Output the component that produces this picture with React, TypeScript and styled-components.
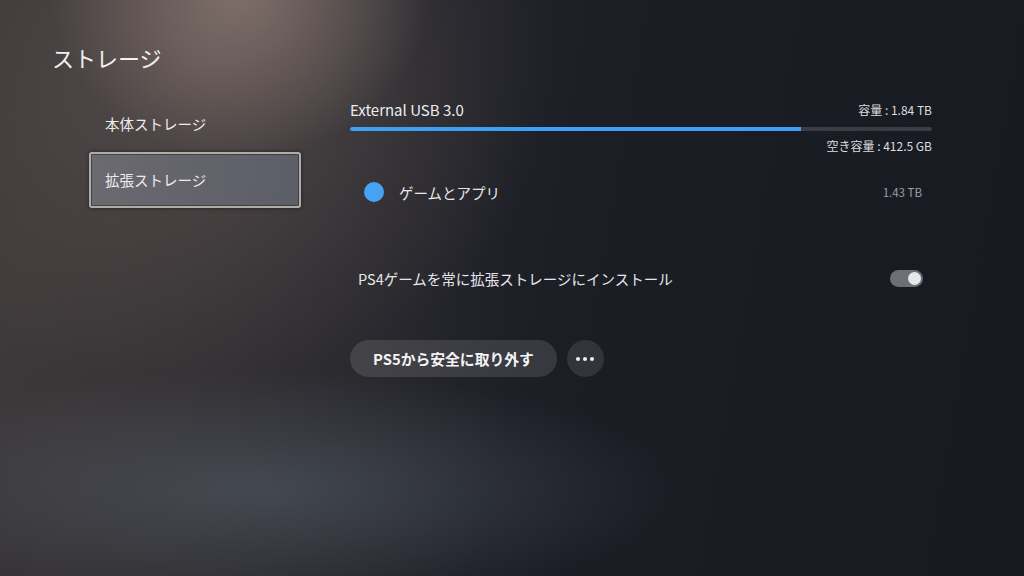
import React from "react";
import styled, { createGlobalStyle } from "styled-components";

const Global = createGlobalStyle`
  html, body { margin: 0; padding: 0; background: #1a1c24; }
  * { box-sizing: border-box; }
`;

const FONT = `"Noto Sans CJK JP", "Noto Sans", "Liberation Sans", sans-serif`;

const Screen = styled.div`
  width: 1024px;
  height: 576px;
  overflow: hidden;
  font-family: ${FONT};
  color: #ececef;
  background:
    radial-gradient(ellipse 190px 170px at 240px -10px, rgba(150,130,122,0.7), rgba(150,130,122,0) 100%),
    radial-gradient(ellipse 360px 330px at 200px 60px, rgba(110,96,92,0.55), rgba(110,96,92,0) 100%),
    radial-gradient(ellipse 420px 120px at 260px 490px, rgba(90,100,112,0.5), rgba(90,100,112,0) 100%),
    radial-gradient(ellipse 520px 620px at 0px 300px, rgba(68,62,62,0.8), rgba(68,62,62,0) 100%),
    linear-gradient(100deg, #2c2a2e 0%, #22232a 35%, #1b1d25 60%, #181a22 100%);
  padding-top: 41px;
`;

const Title = styled.h1`
  margin: 0 0 23px 52px;
  font-size: 22px;
  line-height: 32px;
  font-weight: 400;
  color: #f2f0f0;
`;

const Content = styled.div`
  display: flex;
  align-items: flex-start;
`;

const Sidebar = styled.nav`
  margin-left: 89px;
  width: 212px;
  display: flex;
  flex-direction: column;
`;

const NavItem = styled.div<{ $active?: boolean }>`
  height: 56px;
  display: flex;
  align-items: center;
  padding-left: 14px;
  padding-bottom: 1px;
  font-size: 14.5px;
  color: #ecebec;
  border-radius: 3px;
  border: 2px solid ${(p) => (p.$active ? "#b2aca8" : "transparent")};
  background: ${(p) =>
    p.$active ? "linear-gradient(100deg, #6c6a71 0%, #63636b 50%, #5c5e68 100%)" : "transparent"};
  box-shadow: ${(p) => (p.$active ? "0 0 4px rgba(0,0,0,0.5), inset 0 0 0 1px rgba(40,40,44,0.6)" : "none")};
`;

const Main = styled.section`
  margin-left: 49px;
  width: 582px;
  padding-top: 1px;
  display: flex;
  flex-direction: column;
`;

const HeaderRow = styled.div`
  display: flex;
  justify-content: space-between;
  align-items: center;
  height: 24px;
`;

const DriveName = styled.span`
  font-size: 15px;
  color: #ececef;
`;

const Meta = styled.span`
  font-size: 12px;
  color: #dcdcdf;
`;

const Track = styled.div`
  margin-top: 6px;
  height: 4px;
  background: #3a3d46;
  border-radius: 2px;
  overflow: hidden;
`;

const Fill = styled.div`
  height: 100%;
  background: #3f9ff2;
`;

const FreeRow = styled.div`
  margin-top: 6px;
  height: 16px;
  display: flex;
  justify-content: flex-end;
  align-items: center;
`;

const Row = styled.div<{ $top: number; $left: number; $right: number }>`
  margin-top: ${(p) => p.$top}px;
  height: 40px;
  display: flex;
  align-items: center;
  padding-left: ${(p) => p.$left}px;
  padding-right: ${(p) => p.$right}px;
`;

const Dot = styled.span`
  width: 20px;
  height: 20px;
  border-radius: 50%;
  background: #45a2f5;
  margin-right: 15px;
  flex: none;
`;

const Label = styled.span`
  font-size: 14.5px;
  color: #e6e6ea;
  flex: 1;
`;

const Value = styled.span`
  font-size: 11.5px;
  color: #9c9fa7;
`;

const Toggle = styled.span`
  width: 33px;
  height: 17px;
  border-radius: 9px;
  background: #6e6f76;
  position: relative;
  flex: none;
  &::after {
    content: "";
    position: absolute;
    right: 2px;
    top: 2px;
    width: 13px;
    height: 13px;
    border-radius: 50%;
    background: #e8e8ea;
  }
`;

const Actions = styled.div`
  margin-top: 42px;
  display: flex;
  gap: 10px;
`;

const PillButton = styled.button`
  height: 37px;
  padding: 0 23px;
  border: none;
  border-radius: 19px;
  background: rgba(255, 255, 255, 0.12);
  color: #f4f4f6;
  font-family: ${FONT};
  font-size: 14.8px;
  font-weight: 700;
  cursor: pointer;
`;

const RoundButton = styled.button`
  width: 37px;
  height: 37px;
  border: none;
  border-radius: 50%;
  background: rgba(255, 255, 255, 0.1);
  display: flex;
  align-items: center;
  justify-content: center;
  gap: 3px;
  padding: 0;
`;

const Pip = styled.span`
  width: 4px;
  height: 4px;
  border-radius: 50%;
  background: #f0f0f2;
`;

export default function App() {
  const usedRatio = 0.775;
  return (
    <>
      <Global />
      <Screen>
        <Title>ストレージ</Title>
        <Content>
          <Sidebar>
            <NavItem>本体ストレージ</NavItem>
            <NavItem $active>拡張ストレージ</NavItem>
          </Sidebar>
          <Main>
            <HeaderRow>
              <DriveName>External USB 3.0</DriveName>
              <Meta>容量 : 1.84 TB</Meta>
            </HeaderRow>
            <Track>
              <Fill style={{ width: `${usedRatio * 100}%` }} />
            </Track>
            <FreeRow>
              <Meta>空き容量 : 412.5 GB</Meta>
            </FreeRow>
            <Row $top={19} $left={14} $right={10}>
              <Dot />
              <Label>ゲームとアプリ</Label>
              <Value>1.43 TB</Value>
            </Row>
            <Row $top={46} $left={8} $right={9}>
              <Label>PS4ゲームを常に拡張ストレージにインストール</Label>
              <Toggle />
            </Row>
            <Actions>
              <PillButton>PS5から安全に取り外す</PillButton>
              <RoundButton>
                <Pip />
                <Pip />
                <Pip />
              </RoundButton>
            </Actions>
          </Main>
        </Content>
      </Screen>
    </>
  );
}
